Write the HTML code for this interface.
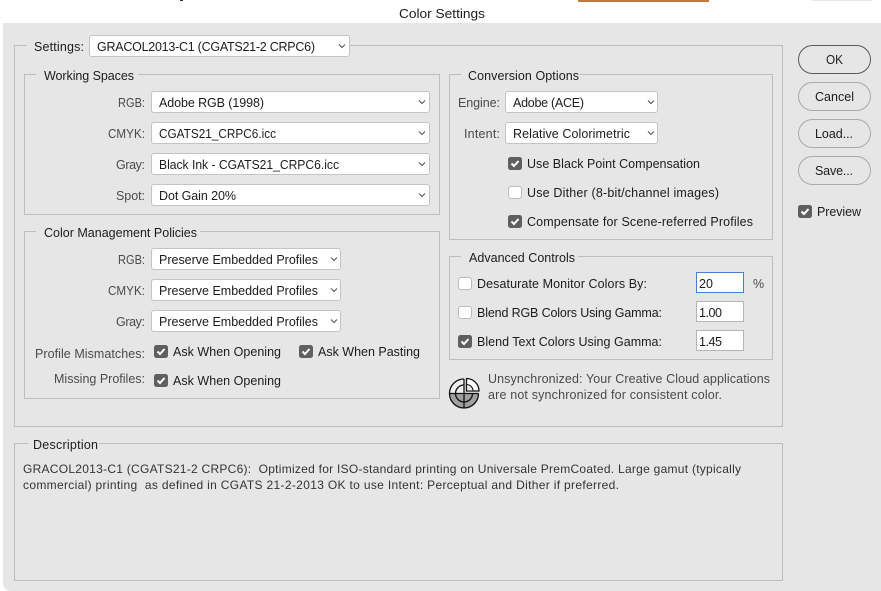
<!DOCTYPE html>
<html><head><meta charset="utf-8"><style>
html,body{margin:0;padding:0;background:#fff;width:881px;height:591px;overflow:hidden}
svg{display:block}
text{font-family:"Liberation Sans",sans-serif;font-size:12.5px;fill:#1c1c1c}
.l{fill:#4a4a4a}
.b{fill:none;stroke:#bdbdbd;stroke-width:1}
.s{fill:#fff;stroke:#c4c4c4;stroke-width:1}
.c{fill:none;stroke:#555;stroke-width:1.1}
.k{fill:#5f5f5f}
.m{fill:none;stroke:#fff;stroke-width:2}
.u{fill:#fff;stroke:#bbb;stroke-width:1}
.p{fill:none;stroke:#a9a9a9;stroke-width:1}
</style></head><body>
<svg width="881" height="591" viewBox="0 0 881 591" xmlns="http://www.w3.org/2000/svg">
<rect x="578" y="0" width="131" height="2" fill="#c07a3e"/>
<rect x="180" y="0" width="3" height="1" fill="#333"/>
<rect x="812" y="0" width="60" height="1" fill="#e8e4e8"/>
<path d="M3 23H881V591H10Q3 590 3 582Z" fill="#e6e6e6"/>
<text x="399" y="18" style="font-size:13px" textLength="86" lengthAdjust="spacingAndGlyphs">Color Settings</text>

<!-- outer settings box -->
<path class="b" d="M27 45.500H14.500V426.500H782.500V45.500H350"/>
<text x="34" y="51" textLength="50">Settings:</text>
<rect class="s" x="89.500" y="35.500" width="260" height="21" rx="2.500"/>
<text x="97" y="51" textLength="218">GRACOL2013-C1 (CGATS21-2 CRPC6)</text>
<path class="c" d="M339 44.500l3 3 3-3"/>

<!-- working spaces -->
<path class="b" d="M36 74.500H24.500V214.500H439.500V74.500H138"/>
<text x="44" y="80" textLength="90">Working Spaces</text>
<text class="l" x="118" y="107" textLength="27" lengthAdjust="spacingAndGlyphs">RGB:</text>
<text class="l" x="108" y="138" textLength="37" lengthAdjust="spacingAndGlyphs">CMYK:</text>
<text class="l" x="116" y="169" textLength="29">Gray:</text>
<text class="l" x="116" y="200" textLength="29">Spot:</text>
<rect class="s" x="151.500" y="91.500" width="278" height="21" rx="2.500"/>
<rect class="s" x="151.500" y="122.500" width="278" height="21" rx="2.500"/>
<rect class="s" x="151.500" y="153.500" width="278" height="21" rx="2.500"/>
<rect class="s" x="151.500" y="184.500" width="278" height="21" rx="2.500"/>
<text x="159" y="107" textLength="105">Adobe RGB (1998)</text>
<text x="159" y="138" textLength="117" lengthAdjust="spacingAndGlyphs">CGATS21_CRPC6.icc</text>
<text x="159" y="169" textLength="180" lengthAdjust="spacingAndGlyphs">Black Ink - CGATS21_CRPC6.icc</text>
<text x="159" y="200" textLength="77">Dot Gain 20%</text>
<path class="c" d="M419 100.500l3 3 3-3M419 131.500l3 3 3-3M419 162.500l3 3 3-3M419 193.500l3 3 3-3"/>

<!-- CM policies -->
<path class="b" d="M36 231.500H24.500V398.500H439.500V231.500H200"/>
<text x="44" y="237" textLength="153">Color Management Policies</text>
<text class="l" x="118" y="264" textLength="27" lengthAdjust="spacingAndGlyphs">RGB:</text>
<text class="l" x="108" y="295" textLength="37" lengthAdjust="spacingAndGlyphs">CMYK:</text>
<text class="l" x="116" y="326" textLength="29">Gray:</text>
<rect class="s" x="151.500" y="248.500" width="189" height="21" rx="2.500"/>
<rect class="s" x="151.500" y="279.500" width="189" height="21" rx="2.500"/>
<rect class="s" x="151.500" y="310.500" width="189" height="21" rx="2.500"/>
<text x="159" y="264" textLength="159">Preserve Embedded Profiles</text>
<text x="159" y="295" textLength="159">Preserve Embedded Profiles</text>
<text x="159" y="326" textLength="159">Preserve Embedded Profiles</text>
<path class="c" d="M331 257.500l3 3 3-3M331 288.500l3 3 3-3M331 319.500l3 3 3-3"/>
<text class="l" x="35" y="358" textLength="110">Profile Mismatches:</text>
<text class="l" x="54" y="383" textLength="91">Missing Profiles:</text>
<rect class="k" x="154" y="345" width="14" height="13" rx="2.500"/><path class="m" d="M157.500 351.500l2.500 2.500 4.500-5"/>
<text x="173" y="356" textLength="108">Ask When Opening</text>
<rect class="k" x="299" y="345" width="14" height="13" rx="2.500"/><path class="m" d="M302.500 351.500l2.500 2.500 4.500-5"/>
<text x="318" y="356" textLength="102">Ask When Pasting</text>
<rect class="k" x="154" y="374" width="14" height="13" rx="2.500"/><path class="m" d="M157.500 380.500l2.500 2.500 4.500-5"/>
<text x="173" y="385" textLength="108">Ask When Opening</text>

<!-- conversion options -->
<path class="b" d="M461 74.500H449.500V239.500H772.500V74.500H580"/>
<text x="468" y="80" textLength="111">Conversion Options</text>
<text class="l" x="458" y="107" textLength="42">Engine:</text>
<text class="l" x="464" y="138" textLength="36">Intent:</text>
<rect class="s" x="505.500" y="91.500" width="152" height="21" rx="2.500"/>
<rect class="s" x="505.500" y="122.500" width="152" height="21" rx="2.500"/>
<text x="513" y="107" textLength="71">Adobe (ACE)</text>
<text x="513" y="138" textLength="117">Relative Colorimetric</text>
<path class="c" d="M648 100.500l3 3 3-3M648 131.500l3 3 3-3"/>
<rect class="k" x="508" y="157" width="14" height="13" rx="2.500"/><path class="m" d="M511.500 163.500l2.500 2.500 4.500-5"/>
<text x="527" y="168" textLength="173">Use Black Point Compensation</text>
<rect class="u" x="508.500" y="186.500" width="13" height="12" rx="2.500"/>
<text x="527" y="197" textLength="192">Use Dither (8-bit/channel images)</text>
<rect class="k" x="508" y="215" width="14" height="13" rx="2.500"/><path class="m" d="M511.500 221.500l2.500 2.500 4.500-5"/>
<text x="527" y="226" textLength="226">Compensate for Scene-referred Profiles</text>

<!-- buttons -->
<rect x="798.500" y="45.500" width="72" height="28" rx="14" fill="#e6e6e6" stroke="#5a5a5a"/>
<text x="826" y="64" textLength="17" lengthAdjust="spacingAndGlyphs">OK</text>
<rect class="p" x="798.500" y="82.500" width="72" height="28" rx="14"/>
<text x="815" y="101" textLength="39">Cancel</text>
<rect class="p" x="798.500" y="119.500" width="72" height="28" rx="14"/>
<text x="815" y="138" textLength="38">Load...</text>
<rect class="p" x="798.500" y="156.500" width="72" height="28" rx="14"/>
<text x="815" y="175" textLength="38">Save...</text>
<rect class="k" x="798" y="205" width="14" height="13" rx="2.500"/><path class="m" d="M801.500 211.500l2.500 2.500 4.500-5"/>
<text x="817" y="216" textLength="44">Preview</text>

<!-- advanced controls -->
<path class="b" d="M461 256.500H449.500V359.500H772.500V256.500H578"/>
<text x="469" y="262" textLength="106">Advanced Controls</text>
<rect class="u" x="458.500" y="277.500" width="13" height="12" rx="2.500"/>
<text x="477" y="288" textLength="170">Desaturate Monitor Colors By:</text>
<rect class="u" x="458.500" y="306.500" width="13" height="12" rx="2.500"/>
<text x="477" y="317" textLength="185">Blend RGB Colors Using Gamma:</text>
<rect class="k" x="458" y="335" width="14" height="13" rx="2.500"/><path class="m" d="M461.500 341.500l2.500 2.500 4.500-5"/>
<text x="477" y="346" textLength="185">Blend Text Colors Using Gamma:</text>
<rect x="696.500" y="272.500" width="47" height="20" fill="#fff" stroke="#4a7fd0"/>
<rect x="696.500" y="301.500" width="47" height="20" fill="#fff" stroke="#b5b5b5"/>
<rect x="696.500" y="330.500" width="47" height="20" fill="#fff" stroke="#b5b5b5"/>
<text x="699" y="288">20</text>
<text x="699" y="317" textLength="23">1.00</text>
<text x="699" y="346" textLength="23">1.45</text>
<text class="l" x="753" y="288" textLength="10">%</text>

<!-- sync icon -->
<path d="M449.500 393.500A14.500 14.500 0 0 0 478.500 393.500Z" fill="#a0a0a0"/>
<path d="M464 379A14.500 14.500 0 0 0 449.500 393.500H464Z" fill="#eee"/>
<g fill="none" stroke="#111" stroke-width="1.300">
<path d="M464 379A14.500 14.500 0 1 0 478.500 393.500"/>
<path d="M464 385A8.500 8.500 0 1 0 472.500 393.500"/>
<path d="M449.500 393.500H478.500M464 379V408"/>
</g>
<path d="M466.500 378.500A12.500 12.500 0 0 1 479 391H466.500Z" fill="#fff" stroke="#111" stroke-width="1.300"/>
<path d="M466.500 384.500A6.500 6.500 0 0 1 473 391H466.500Z" fill="#e6e6e6" stroke="#111" stroke-width="1.100"/>
<text class="l" x="488" y="383" textLength="282">Unsynchronized: Your Creative Cloud applications</text>
<text class="l" x="488" y="399" textLength="234">are not synchronized for consistent color.</text>

<!-- description -->
<path class="b" d="M28 443.500H14.500V580.500H782.500V443.500H99"/>
<text x="33" y="449" textLength="65">Description</text>
<text style="fill:#333;font-size:12px" x="23" y="473" textLength="718" xml:space="preserve">GRACOL2013-C1 (CGATS21-2 CRPC6):  Optimized for ISO-standard printing on Universale PremCoated. Large gamut (typically</text>
<text style="fill:#333;font-size:12px" x="23" y="489" textLength="596" xml:space="preserve">commercial) printing  as defined in CGATS 21-2-2013 OK to use Intent: Perceptual and Dither if preferred.</text>
</svg>
</body></html>
